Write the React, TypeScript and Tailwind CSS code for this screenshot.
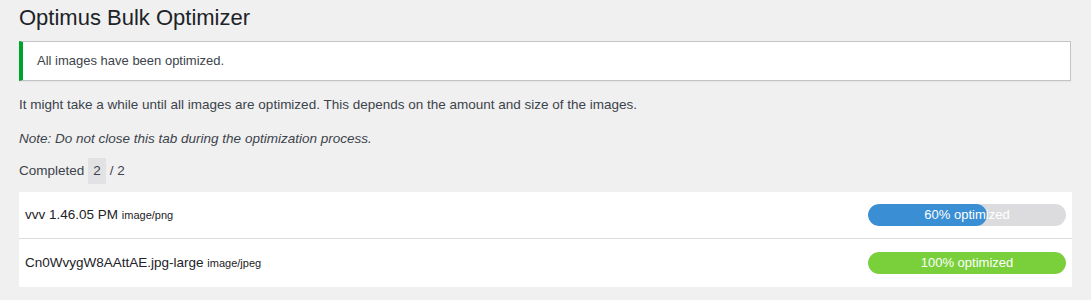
const files = [
  { name: "vvv 1.46.05 PM", mime: "image/png", percent: 60, done: false },
  { name: "Cn0WvygW8AAttAE.jpg-large", mime: "image/jpeg", percent: 100, done: true },
];

function Progress({ percent, done }: { percent: number; done: boolean }) {
  return (
    <div className="relative h-[22px] w-[198px] overflow-hidden rounded-full bg-[#dcdcde]">
      <div
        className={done ? "h-full rounded-full bg-[#7ad03a]" : "h-full rounded-full bg-[#3a8ed4]"}
        style={{ width: `${percent}%` }}
      />
      <span className="absolute inset-0 flex items-center justify-center text-[13px] text-white">
        {percent}% optimized
      </span>
    </div>
  );
}

export default function App() {
  return (
    <div className="min-h-[300px] bg-[#f0f0f1] pl-[19px] pr-[20px] text-[13px] text-[#3c434a] [font-family:'Liberation_Sans',Arial,sans-serif]">
      <h1 className="pt-[3px] text-[22px] leading-[29px] font-normal text-[#1d2327]">Optimus Bulk Optimizer</h1>

      <div className="mt-[9px] flex h-[40px] items-center border border-l-4 border-[#c3c4c7] border-l-[#00a32a] bg-white pl-[14px] shadow-[0_1px_1px_rgba(0,0,0,0.04)]">
        <p>All images have been optimized.</p>
      </div>

      <p className="mt-[14px] text-[13.5px] leading-[19px]">
        It might take a while until all images are optimized. This depends on the amount and size of the images.
      </p>
      <p className="mt-[15px] text-[13.5px] leading-[19px] italic">Note: Do not close this tab during the optimization process.</p>
      <div className="mt-[10px] flex items-center gap-[4px] text-[13.5px]">
        <span>Completed</span>
        <span className="flex h-[26px] items-center bg-[#e2e2e4] px-[5px]">2</span>
        <span>/ 2</span>
      </div>

      <div className="mt-[8px] mr-[-1px] bg-white">
        {files.map((f, i) => (
          <div
            key={f.name}
            className={
              i === 0
                ? "flex h-[47px] items-center justify-between border-b border-[#dcdcde] pr-[6px] pl-[6px]"
                : "flex h-[48px] items-center justify-between pr-[6px] pl-[6px]"
            }
          >
            <div className="text-[13.5px] text-[#1d2327]">
              {f.name} <span className="text-[11px]">{f.mime}</span>
            </div>
            <Progress percent={f.percent} done={f.done} />
          </div>
        ))}
      </div>
    </div>
  );
}
